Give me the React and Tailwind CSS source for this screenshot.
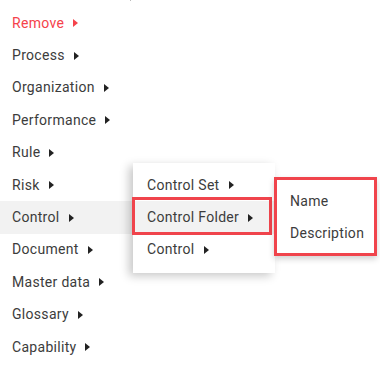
import React from "react";

const Caret = ({ red }) => (
  <svg width="5" height="8" viewBox="0 0 5 8" className="ml-[9px] shrink-0">
    <path d="M0 0 L5 4 L0 8 Z" fill={red ? "#f5424b" : "#222"} />
  </svg>
);

const mainItems = [
  "Remove",
  "Process",
  "Organization",
  "Performance",
  "Rule",
  "Risk",
  "Control",
  "Document",
  "Master data",
  "Glossary",
  "Capability",
];

const subItems = ["Control Set", "Control Folder", "Control"];

const App = () => {
  return (
    <div
      className="relative w-[380px] h-[371px] bg-white overflow-hidden text-[14px] tracking-[0.3px] text-[#3c3c3c]"
      style={{ fontFamily: "Roboto, 'Liberation Sans', sans-serif" }}
    >
      <div className="absolute left-[130px] top-0 w-[1px] h-[1px] bg-[#bbb]"></div>

      {/* main menu */}
      <div className="w-[140px] pt-[7px]">
        {mainItems.map((item, i) => (
          <div
            key={i}
            className={`h-[32.4px] flex items-center pl-[12px] ${
              i === 6 ? "bg-[#f2f2f2]" : ""
            } ${item === "Remove" ? "text-[#f5424b]" : ""}`}
          >
            <span>{item}</span>
            <Caret red={item === "Remove"} />
          </div>
        ))}
      </div>

      {/* submenu */}
      <div className="absolute left-[133px] top-[163px] w-[142px] h-[110px] bg-white py-[6px] shadow-[-4px_3px_9px_rgba(0,0,0,0.22)]">
        {subItems.map((item, i) => (
          <div
            key={i}
            className={`relative h-[32.4px] flex items-center pl-[14px] ${
              i === 1 ? "bg-[#f2f2f2]" : ""
            }`}
          >
            <span>{item}</span>
            <Caret />
            {i === 1 && (
              <span className="absolute left-[-1px] right-[3px] top-[-4px] bottom-[-1px] border-[3px] border-[#f0444c]"></span>
            )}
          </div>
        ))}
      </div>

      {/* third level */}
      <div className="absolute left-[274px] top-[177px] w-[103px] h-[79px] bg-white border-[3px] border-[#f0444c] pt-[5px] shadow-[0_3px_6px_rgba(0,0,0,0.18)]">
        <div className="h-[32px] flex items-center pl-[13px]">Name</div>
        <div className="h-[32px] flex items-center pl-[13px]">Description</div>
      </div>
    </div>
  );
};

export default App;
